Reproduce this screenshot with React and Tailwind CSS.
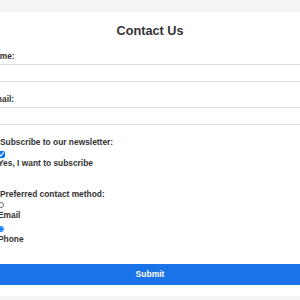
import React from "react";

const labelCls = "block text-[8.4px] leading-[10px] font-bold text-[#333]";

export default function App() {
  return (
    <div
      className="w-[300px] h-[300px] overflow-hidden bg-[#f4f4f4] pt-[12px] flex justify-center"
      style={{ fontFamily: '"Liberation Sans", Arial, sans-serif' }}
    >
      <form
        className="w-[322px] shrink-0 bg-white pt-[12px] pb-[10px] h-[284px]"
        onSubmit={(e) => e.preventDefault()}
      >
        <h2 className="text-center text-[12.7px] leading-[15px] font-bold text-[#333]">
          Contact Us
        </h2>

        {/* text fields */}
        <div className="mt-[12px]">
          <label className={labelCls}>Name:</label>
          <input
            type="text"
            className="mt-[3px] block w-full h-[18px] border border-[#ddd] bg-white"
          />
        </div>
        <div className="mt-[12px]">
          <label className={labelCls}>Email:</label>
          <input
            type="email"
            className="mt-[3px] block w-full h-[18px] border border-[#ddd] bg-white"
          />
        </div>

        {/* newsletter */}
        <div className="mt-[12px] pl-[9px]">
          <label className={`${labelCls} ml-[2px]`}>Subscribe to our newsletter:</label>
          <input
            type="checkbox"
            defaultChecked
            className="block m-0 mt-[4px] w-[6.5px] h-[6.5px]"
          />
          <label className={labelCls}>Yes, I want to subscribe</label>
        </div>

        {/* contact method */}
        <div className="mt-[21px] pl-[9px]">
          <label className={`${labelCls} ml-[2px]`}>Preferred contact method:</label>
          <input
            type="radio"
            name="method"
            className="block m-0 mt-[3.5px] w-[6px] h-[6px]"
          />
          <label className={`${labelCls} mt-[2px]`}>Email</label>
          <input
            type="radio"
            name="method"
            defaultChecked
            className="block m-0 mt-[6px] w-[6px] h-[6px]"
          />
          <label className={`${labelCls} mt-[2px]`}>Phone</label>
        </div>

        <button
          type="submit"
          className="mt-[20px] block w-full h-[21px] bg-[#1a73e8] text-white text-[8.5px] font-bold"
        >
          Submit
        </button>
      </form>
    </div>
  );
}
